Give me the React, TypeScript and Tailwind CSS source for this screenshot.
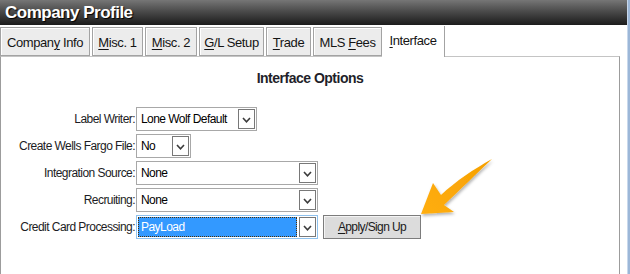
import React from "react";

type Tab = { before: string; key: string; after: string; w: string };

const tabs: Tab[] = [
  { before: "Compan", key: "y", after: " Info", w: "w-[90px] mr-[2px]" },
  { before: "", key: "M", after: "isc. 1", w: "w-[51px] mr-[2px]" },
  { before: "", key: "M", after: "isc. 2", w: "w-[52px] mr-[2px]" },
  { before: "", key: "G", after: "/L Setup", w: "w-[65px] mr-[2px]" },
  { before: "", key: "T", after: "rade", w: "w-[45px] mr-[2px]" },
  { before: "MLS ", key: "F", after: "ees", w: "w-[69px]" },
];

const Chevron: React.FC = () => (
  <svg width="9" height="6" viewBox="0 0 9 6">
    <polyline points="1,1 4.5,4.8 8,1" fill="none" stroke="#3c3c3c" strokeWidth="1.6" />
  </svg>
);

const Select: React.FC<{ value: string; width: string; active?: boolean }> = ({ value, width, active }) => (
  <div
    className={`${width} h-[24px] flex items-center bg-white border ${
      active ? "border-[#8fc2ee]" : "border-[#a8a8a8]"
    }`}
  >
    {active ? (
      <div className="flex-1 self-stretch m-[1px] mr-[2px] bg-[#3399ff] border border-dotted border-[#4a3008] flex items-center pl-[2px] text-white">
        {value}
      </div>
    ) : (
      <div className="flex-1 pl-[4px] text-black">{value}</div>
    )}
    <div className="w-[17px] h-[20px] mr-[1px] border border-[#787878] bg-white flex items-center justify-center pt-[2px]">
      <Chevron />
    </div>
  </div>
);

const Row: React.FC<{ label: string; children: React.ReactNode }> = ({ label, children }) => (
  <div className="flex items-center h-[24px]">
    <div className="w-[135px] text-right pr-[1px] text-[#1c1c24]">{label}</div>
    {children}
  </div>
);

const App: React.FC = () => {
  return (
    <div className="relative w-[630px] h-[274px] overflow-hidden bg-white font-['Liberation_Sans',Arial,sans-serif]">
      <div className="flex h-full">
        <div className="w-[627px] flex flex-col">
          {/* title bar */}
          <div className="h-[25px] flex items-center pl-[5px] bg-linear-to-b from-[#767676] to-[#1c1c1c]">
            <span className="text-white font-bold text-[17px] tracking-[-0.5px] [text-shadow:1px_1px_1px_#000]">
              Company Profile
            </span>
          </div>

          {/* tabs */}
          <div className="h-[31px] mt-[1px] flex items-end relative z-10 text-[13px] tracking-[-0.4px] text-[#141414]">
            {tabs.map((t, i) => (
              <div
                key={i}
                className={`${t.w} h-[29px] mb-[1px] border border-[#a3a3a3] bg-[#ececec] shadow-[inset_1px_1px_0_#fff] flex items-center justify-center pt-[2px]`}
              >
                <span className="whitespace-pre">
                  {t.before}
                  <span className="underline underline-offset-2">{t.key}</span>
                  {t.after}
                </span>
              </div>
            ))}
            <div className="w-[63px] h-[31px] border-r border-[#a3a3a3] bg-white flex items-center justify-center pb-[1px]">
              <span>
                <span className="underline underline-offset-2">I</span>nterface
              </span>
            </div>
          </div>

          {/* panel */}
          <div className="w-[620px] flex-1 -mt-px border-t border-l border-r border-t-[#c4c4c4] border-l-[#9c9c9c] border-r-[#9c9c9c] flex flex-col">
            <div className="pt-[11px] text-center font-bold text-[14px] tracking-[-0.5px] text-[#1f1f2a]">
              Interface Options
            </div>
            <div className="mt-[18px] flex flex-col gap-[3px] text-[12px] tracking-[-0.55px]">
              <Row label="Label Writer:">
                <Select value="Lone Wolf Default" width="w-[121px]" />
              </Row>
              <Row label="Create Wells Fargo File:">
                <Select value="No" width="w-[55px]" />
              </Row>
              <Row label="Integration Source:">
                <Select value="None" width="w-[182px]" />
              </Row>
              <Row label="Recruiting:">
                <Select value="None" width="w-[182px]" />
              </Row>
              <Row label="Credit Card Processing:">
                <Select value="PayLoad" width="w-[182px]" active />
                <button className="ml-[5px] w-[98px] h-[24px] bg-[#dcdcdc] border border-[#7c7c7c] shadow-[inset_1px_1px_0_#f4f4f4] text-[#1a1a1a] tracking-[-0.6px]">
                  <span className="underline underline-offset-2">A</span>pply/Sign Up
                </button>
              </Row>
            </div>
          </div>
        </div>
        <div className="w-[3px] bg-[#9cb7d8] border-l border-[#c8d8ec]" />
      </div>

      {/* callout arrow */}
      <svg className="absolute left-0 top-0 pointer-events-none" width="630" height="274" viewBox="0 0 630 274">
        <defs>
          <filter id="sh" x="-20%" y="-20%" width="140%" height="140%">
            <feDropShadow dx="1" dy="2" stdDeviation="1.5" floodColor="#000" floodOpacity="0.3" />
          </filter>
          <linearGradient id="og" x1="0" y1="1" x2="1" y2="0">
            <stop offset="0" stopColor="#ffae12" />
            <stop offset="1" stopColor="#f6a000" />
          </linearGradient>
        </defs>
        <path
          d="M 492 159 C 474 169 456 181 441 195 L 433 183 L 421 214 L 454 212 L 444 205 C 460 190 477 173 492 159 Z"
          fill="url(#og)"
          filter="url(#sh)"
        />
      </svg>
    </div>
  );
};

export default App;
